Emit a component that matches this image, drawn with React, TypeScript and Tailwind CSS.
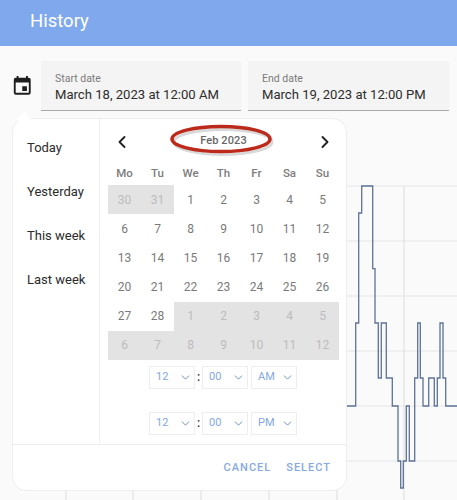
import React from "react";
import { ChevronLeft, ChevronRight, ChevronDown } from "lucide-react";

const weekdays = ["Mo", "Tu", "We", "Th", "Fr", "Sa", "Su"];

const days: { label: number; off?: boolean }[] = [
  { label: 30, off: true },
  { label: 31, off: true },
  ...Array.from({ length: 28 }, (_, i) => ({ label: i + 1 })),
  ...Array.from({ length: 12 }, (_, i) => ({ label: i + 1, off: true })),
];

const ranges = ["Today", "Yesterday", "This week", "Last week"];

const chartLine =
  "M347 406H355.7V323H358.7V213H361.7V186H372.7V268.7H375V323H378.3V378H381.3V323H386.3V378H392.3V406H398V461H400.7V488H403.3V461H406.3V406H409.3V461H414.7V378H417.7V323H420.3V378H423V406H428.7V378H434.3V406H437.3V378H440V323H443V378H445.7V406H457";

const TimeSelect = ({ value }: { value: string }) => (
  <div className="flex h-[23px] w-[46px] items-center justify-between border border-[#eeeeee] pl-[6px] pr-[2px] text-[11px] text-[#83a8e4]">
    <span>{value}</span>
    <ChevronDown className="h-[13px] w-[13px] text-[#5f7fb5]" strokeWidth={1.6} />
  </div>
);

const TimeRow = ({ period }: { period: string }) => (
  <div className="flex items-center pl-[41px]">
    <TimeSelect value="12" />
    <span className="w-[7px] text-center text-[12px] font-medium text-[#333333]">:</span>
    <TimeSelect value="00" />
    <div className="w-[3px]" />
    <TimeSelect value={period} />
  </div>
);

const DateField = ({ label, value, width }: { label: string; value: string; width: string }) => (
  <div className={`${width} h-[50px] border-b border-[#a8a8a8] bg-[#f4f4f4] pl-[14px] pt-[11px]`}>
    <div className="text-[10.5px] leading-[14px] text-[#7b7b7b]">{label}</div>
    <div className="text-[13.1px] leading-[17px] text-[#2d2d2d]">{value}</div>
  </div>
);

export default function App() {
  return (
    <div className="relative h-[500px] w-[457px] overflow-hidden bg-[#fafafa] font-['Roboto',sans-serif]">
      <header className="flex h-[46px] items-center bg-[#7fa9ec] pb-[3px] pl-[30px] text-[18.5px] text-white">
        History
      </header>

      <div className="flex items-center pl-[11px] pt-[15px]">
        <svg viewBox="0 0 24 24" className="mr-[7.5px] h-[22.5px] w-[22.5px] fill-[#1e1e1e]">
          <path d="M17 12h-5v5h5v-5zM16 1v2H8V1H6v2H5c-1.11 0-1.99.9-1.99 2L3 19c0 1.1.89 2 2 2h14c1.1 0 2-.9 2-2V5c0-1.1-.9-2-2-2h-1V1h-2zm3 18H5V8h14v11z" />
        </svg>
        <div className="flex gap-[7px]">
          <DateField width="w-[200px]" label="Start date" value="March 18, 2023 at 12:00 AM" />
          <DateField width="w-[201px]" label="End date" value="March 19, 2023 at 12:00 PM" />
        </div>
      </div>

      {/* chart behind the picker */}
      <svg viewBox="0 111 457 389" className="block h-[389px] w-[457px]" fill="none">
        {[186, 241, 296, 351, 406, 461].map((y) => (
          <path key={y} d={`M40 ${y}H457`} stroke="#e6e6e6" />
        ))}
        {[66, 133, 201, 269, 337, 404].map((x) => (
          <path key={x} d={`M${x} 186V500`} stroke="#dddddd" />
        ))}
        <path d={chartLine} stroke="#5d7397" strokeWidth="1.3" />
      </svg>

      {/* date range popup */}
      <div className="absolute left-[12px] top-[118px] h-[373px] w-[335px] rounded-[14px] border border-[#eeeeee] bg-white">
        <div className="absolute left-[6px] top-[-5px] h-[10px] w-[10px] rotate-45 bg-white" />
        <div className="flex h-[326px] border-b border-[#eeeeee]">
          <div className="flex w-[87px] shrink-0 flex-col border-r border-[#eeeeee] pl-[14px] pt-[19px] text-[13px] text-[#2b2b2b]">
            {ranges.map((r) => (
              <div key={r} className="h-[44px] leading-[20px]">
                {r}
              </div>
            ))}
          </div>

          <div className="flex-1 px-[8px]">
            <div className="flex h-[44px] w-[231px] items-center justify-between px-[4px] pt-[1px]">
              <ChevronLeft className="h-[20px] w-[20px] text-[#222222]" strokeWidth={2.25} />
              <span className="text-[11px] font-medium tracking-[0.1px] text-[#666666]">Feb 2023</span>
              <ChevronRight className="h-[20px] w-[20px] text-[#222222]" strokeWidth={2.25} />
            </div>
            <div className="grid h-[22px] w-[231px] grid-cols-7 items-center text-center text-[11.5px] font-medium text-[#7d7d7d]">
              {weekdays.map((d) => (
                <div key={d}>{d}</div>
              ))}
            </div>
            <div className="grid w-[231px] grid-cols-7 auto-rows-[29.17px] text-[12px]">
              {days.map((d, i) => (
                <div
                  key={i}
                  className={`flex items-center justify-center ${d.off ? "bg-[#e3e3e3] text-[#bcbcbc]" : "text-[#7a7a7a]"}`}
                >
                  {d.label}
                </div>
              ))}
            </div>
            <div className="mt-[6px] flex flex-col gap-[23px]">
              <TimeRow period="AM" />
              <TimeRow period="PM" />
            </div>
          </div>
        </div>
        <div className="flex h-[46px] items-center justify-end gap-[15px] pr-[15px] text-[11px] font-medium tracking-[1px] text-[#86a9e4]">
          <span>CANCEL</span>
          <span>SELECT</span>
        </div>
      </div>

      {/* red annotation around the month */}
      <svg viewBox="0 0 457 500" className="pointer-events-none absolute left-0 top-0 h-[500px] w-[457px]" fill="none">
        <ellipse cx="222" cy="140.5" rx="49" ry="12.5" stroke="#d9d9d9" strokeWidth="3" transform="translate(1 1.5)" />
        <ellipse cx="221" cy="139" rx="49" ry="12.5" stroke="#bb2a1b" strokeWidth="3.5" />
      </svg>
    </div>
  );
}
